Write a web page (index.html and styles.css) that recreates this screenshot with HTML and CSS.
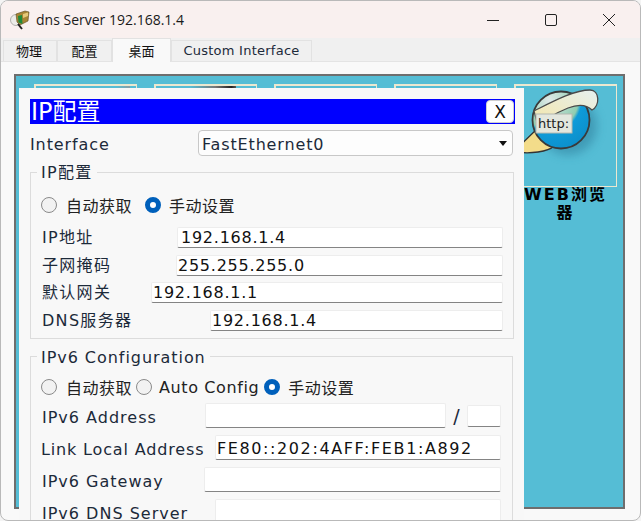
FILE: index.html
```html
<!DOCTYPE html>
<html lang="zh">
<head>
<meta charset="utf-8">
<title>dns Server 192.168.1.4</title>
<link rel="stylesheet" href="styles.css">
</head>
<body>
<div class="window">
  <header class="titlebar">
    <svg class="app-icon" width="20" height="20" viewBox="0 0 20 20">
      <circle cx="6" cy="10" r="5.5" fill="#ecece8" stroke="#b0b0ac" stroke-width="1"/>
      <path d="M6 4 L15 1 L19 2 L18 11 L10 15 L7 12 Z" fill="#a88534" stroke="#5a4a20" stroke-width=".6"/>
      <path d="M8 6 L12 5 L12.5 14 L8.5 12.5 Z" fill="#1f8a3a"/>
      <path d="M13 4 L18 2.5 L18 6 L13 8 Z" fill="#e6c878"/>
      <path d="M8 14 L12 19" stroke="#222" stroke-width="2"/>
    </svg>
    <span class="title-text">dns Server 192.168.1.4</span>
    <div class="controls">
      <svg width="14" height="14" viewBox="0 0 14 14"><path d="M1 7.5H13" stroke="#222" stroke-width="1"/></svg>
      <svg width="14" height="14" viewBox="0 0 14 14"><rect x="1.5" y="1.5" width="11" height="11" rx="1.5" fill="none" stroke="#222" stroke-width="1"/></svg>
      <svg width="14" height="14" viewBox="0 0 14 14"><path d="M1 1L13 13M13 1L1 13" stroke="#222" stroke-width="1"/></svg>
    </div>
  </header>
  <nav class="tabs">
    <span class="tab tab-1">物理</span>
    <span class="tab tab-2">配置</span>
    <span class="tab tab-active">桌面</span>
    <span class="tab tab-4">Custom Interface</span>
  </nav>
  <main class="content">
    <div class="desktop">
      <div class="app-col"><div class="app-slot"><div class="peek peek-1"></div></div></div>
      <div class="app-col"><div class="app-slot"><div class="peek peek-2"></div></div></div>
      <div class="app-col"><div class="app-slot"></div></div>
      <div class="app-col"><div class="app-slot"></div></div>
      <div class="app-col">
        <div class="app-slot app-slot-big">
          <svg class="globe" width="103" height="103" viewBox="0 0 103 103">
            <defs>
              <radialGradient id="g" cx="0.3" cy="0.15" r="1">
                <stop offset="0" stop-color="#dfe9e8"/>
                <stop offset="0.5" stop-color="#8fcdb0"/>
                <stop offset="0.56" stop-color="#0f9bd8"/>
                <stop offset="1" stop-color="#0a8cc8"/>
              </radialGradient>
              <linearGradient id="s" x1="0" y1="1" x2="1" y2="0">
                <stop offset="0" stop-color="#f4e6a8"/>
                <stop offset="1" stop-color="#e6f0f0"/>
              </linearGradient>
              <filter id="b" x="-30%" y="-30%" width="160%" height="160%"><feGaussianBlur stdDeviation="5"/></filter>
            </defs>
            <circle cx="54" cy="42" r="29" fill="#2f7f9c" opacity="0.55" filter="url(#b)"/>
            <path d="M24 44 C14 54 4 62 2 68 C16 70 34 68 40 62 C32 60 26 54 24 44Z" fill="#f3dc8a" stroke="#333" stroke-width="1.3"/>
            <circle cx="47" cy="36" r="28.5" fill="url(#g)" stroke="#3a3a3a" stroke-width="1.8"/>
            <path d="M20 27 C38 18 60 6 76 6 C86 6 86 22 78 26 C72 20 64 20 54 24 C42 29 32 34 24 42Z" fill="url(#s)" stroke="#4a4a4a" stroke-width="1.3"/>
            <rect x="22" y="30" width="36" height="19" fill="#e3e7de" stroke="#b4b8b0" stroke-width="1"/>
            <text class="http" x="24" y="44">http:</text>
          </svg>
        </div>
        <div class="app-label">WEB浏览器</div>
      </div>
    </div>
    <section class="dialog">
      <div class="dialog-head">
        <span class="dialog-title">IP配置</span>
        <button class="close">X</button>
      </div>
      <div class="row-interface">
        <span class="lbl-if">Interface</span>
        <div class="select">FastEthernet0<span class="caret"></span></div>
      </div>
      <fieldset class="group group-v4">
        <legend>IP配置</legend>
        <div class="radios radios-v4">
          <span class="radio"></span><span class="radio-text gap-r">自动获取</span>
          <span class="radio on"></span><span class="radio-text">手动设置</span>
        </div>
        <div class="field f1"><label>IP地址</label><div class="input in1">192.168.1.4</div></div>
        <div class="field f2"><label>子网掩码</label><div class="input in2">255.255.255.0</div></div>
        <div class="field f3"><label>默认网关</label><div class="input in3">192.168.1.1</div></div>
        <div class="field f4"><label>DNS服务器</label><div class="input in4">192.168.1.4</div></div>
      </fieldset>
      <fieldset class="group group-v6">
        <legend>IPv6 Configuration</legend>
        <div class="radios radios-v6">
          <span class="radio"></span><span class="radio-text r6a">自动获取</span>
          <span class="radio r6b"></span><span class="radio-text r6c">Auto Config</span>
          <span class="radio on"></span><span class="radio-text">手动设置</span>
        </div>
        <div class="field v1"><label>IPv6 Address</label><div class="input"></div><span class="slash">/</span><div class="input in6"></div></div>
        <div class="field v2"><label>Link Local Address</label><div class="input in7">FE80::202:4AFF:FEB1:A892</div></div>
        <div class="field v3"><label>IPv6 Gateway</label><div class="input"></div></div>
        <div class="field v4"><label>IPv6 DNS Server</label><div class="input"></div></div>
      </fieldset>
    </section>
  </main>
</div>
</body>
</html>
```
FILE: styles.css
```css
* { box-sizing: border-box; }
html, body { margin: 0; height: 100%; }
body {
  width: 641px; height: 521px; overflow: hidden; background: #f4f4f4;
  font-family: "Noto Sans CJK SC", "Noto Sans", sans-serif; color: #111;
}
.window {
  width: 641px; height: 521px; display: flex; flex-direction: column;
  background: #f9f9f9; border: 1px solid #b9b9b9; border-radius: 8px;
  overflow: hidden; position: relative;
}
.titlebar {
  height: 37px; flex: none; display: flex; align-items: center; padding-left: 9px;
  background: #f9f0ef;
}
.app-icon { flex: none; }
.title-text { margin-left: 6px; font-family: "Open Sans", sans-serif; font-size: 14px; color: #1a1a1a; }
.controls { margin-left: auto; display: flex; gap: 44px; padding-right: 24px; }
.tabs {
  height: 24px; flex: none; display: flex; align-items: flex-end; background: #f0f0f0;
  padding-left: 2px; border-bottom: 1px solid #e4e4e4; font-size: 13px;
}
.tab {
  height: 21px; display: flex; align-items: center; justify-content: center;
  background: #f0f0f0; border: 1px solid #e2e2e2; border-bottom: none;
  color: #111; padding-bottom: 1px;
}
.tab-1 { width: 54px; padding-right: 2px; }
.tab-2 { width: 55px; }
.tab-active { width: 59px; height: 24px; margin-bottom: -1px; background: #f9f9f9; padding-bottom: 0; }
.tab-4 {
  width: 141px; font-family: "DejaVu Sans", sans-serif; font-size: 13px; letter-spacing: .25px; color: #1c2a3a;
}
.content { flex: 1; position: relative; padding: 12px 0 0 13px; }
.desktop {
  width: 611px; height: 435px; background: #55bdd5;
  border: 2px solid #6e6e6e;
  display: flex; gap: 17px; padding: 8px 0 0 18px;
}
.app-col { width: 103px; display: flex; flex-direction: column; align-items: center; flex: none; }
.app-slot {
  width: 103px; height: 103px; flex: none;
  border: solid #ece8d0; border-width: 2px 1px 1px 2px;
}
.peek { height: 3px; }
.peek-1 { width: 14px; margin-left: 80px; background: linear-gradient(90deg, #55bdd5, #8a9ea4); }
.peek-2 { width: 46px; margin-left: 34px; background: linear-gradient(90deg, #55bdd5, #777 55%, #222 90%, #555); }
.app-slot-big { position: relative; }
.globe { position: absolute; left: -2px; top: -2px; overflow: visible; }
.http { font-family: "DejaVu Sans", sans-serif; font-size: 13px; fill: #222; }
.app-label {
  width: 92px; margin-top: -1px; text-align: center;
  font-family: "DejaVu Sans", "Noto Sans CJK SC", sans-serif; font-weight: 700; font-size: 16px; line-height: 18px;
  color: #000; letter-spacing: 2px;
}
.dialog {
  position: absolute; left: 18px; top: 26px; width: 505px; height: 440px;
  background: #f8f8f8; padding: 11px 9px 0 11px; overflow: hidden;
}
.dialog-head {
  height: 25px; background: #0000ff; display: flex; align-items: center; justify-content: space-between;
  padding-left: 1px;
}
.dialog-title { color: #fff; font-size: 24px; line-height: 25px; padding-top: 1px; font-family: "DejaVu Sans", "Noto Sans CJK SC", sans-serif; }
.close {
  width: 28px; height: 23px; padding: 0; background: #fff; border: 1px solid #cfcfcf; border-radius: 4px;
  font-family: "DejaVu Sans", sans-serif; font-size: 17px; color: #111; margin-right: 1px;
}
.row-interface { display: flex; align-items: center; height: 26px; margin-top: 6px; }
.lbl-if { width: 168px; padding-top: 2px; font-family: "DejaVu Sans", sans-serif; font-size: 16px; letter-spacing: .9px; color: #1c2a3a; }
.select {
  width: 315px; height: 26px; border: 1px solid #c8c8c8; border-radius: 4px; background: #fdfdfd;
  display: flex; align-items: center; padding: 2px 0 0 3px; justify-content: space-between;
  font-family: "DejaVu Sans", sans-serif; font-size: 16px; letter-spacing: .85px; color: #1c2a3a;
}
.caret {
  width: 0; height: 0; margin: -2px 5px 0 0;
  border: 4px solid transparent; border-top: 5px solid #111; border-bottom: 0;
}
.group { margin: 0; padding: 0 10px; border: 1px solid #dcdcdc; min-width: 0; }
.group legend {
  margin-left: -4px; font-size: 16px; color: #1c2a3a;
  font-family: "DejaVu Sans", "Noto Sans CJK SC", sans-serif;
}
.group-v4 legend { padding: 2px 4px 0; line-height: 18px; letter-spacing: 1.3px; }
.group-v6 legend { padding: 4px 4px 0; line-height: 16px; letter-spacing: .95px; }
.group-v4 { width: 484px; height: 177px; margin-top: 6px; }
.group-v6 { width: 483px; height: 200px; margin-top: 7px; padding-right: 11px; }
.radios { display: flex; align-items: center; height: 22px; font-size: 16px; letter-spacing: .5px; }
.radios-v4 { margin-top: 12px; }
.radios-v6 { margin-top: 10px; }
.radio {
  width: 16px; height: 16px; border-radius: 50%; border: 1px solid #8a8a8a; background: #f2f2f2; flex: none; margin-right: 9px;
}
.radio.on { background: #fff; border: 5px solid #0060bb; margin-right: 8px; }
.radio-text { color: #222; font-family: "Noto Sans CJK SC", sans-serif; }
.gap-r { margin-right: 13px; }
.r6a { margin-right: 4px; }
.r6b { margin-right: 7px; }
.r6c { margin-right: 5px; font-family: "DejaVu Sans", sans-serif; letter-spacing: .6px; }
.field { display: flex; align-items: center; height: 21px; margin-top: 7px; }
.field label {
  flex: none; font-size: 16px; color: #1c2a3a;
  font-family: "DejaVu Sans", "Noto Sans CJK SC", sans-serif;
}
.group-v4 .field label { padding: 0 0 4px 1px; letter-spacing: 1.3px; }
.group-v6 .field label { padding: 3px 0 0 1px; letter-spacing: 1px; }
.group-v6 .v2 label { padding-left: 0; letter-spacing: .85px; }
.input {
  flex: 1; height: 100%; background: #fff; border: 1px solid #ededed; border-bottom: 1px solid #848484; border-radius: 2px;
  padding-left: 1px; font-family: "DejaVu Sans", sans-serif; font-size: 16px; letter-spacing: .75px; line-height: 20px; color: #111;
}
.f1 { margin-top: 11px; }
.f3 { margin-top: 6px; }
.f1 label { width: 136px; }
.f2 label { width: 135px; }
.f3 label { width: 110px; }
.f4 label { width: 169px; }
.in1 { padding-left: 3px; }
.group-v6 .field { height: 25px; }
.v1 { margin-top: 5px; }
.v1 label { width: 164px; }
.v2 label { width: 174px; }
.v3 label { width: 163px; }
.v4 label { width: 174px; }
.slash { width: 21px; flex: none; text-align: center; font-family: "DejaVu Sans", sans-serif; font-size: 19px; color: #1c2a3a; }
.in6 { flex: none; width: 34px; height: 22px; }
.in7 { line-height: 25px; letter-spacing: 1.6px; }
```
